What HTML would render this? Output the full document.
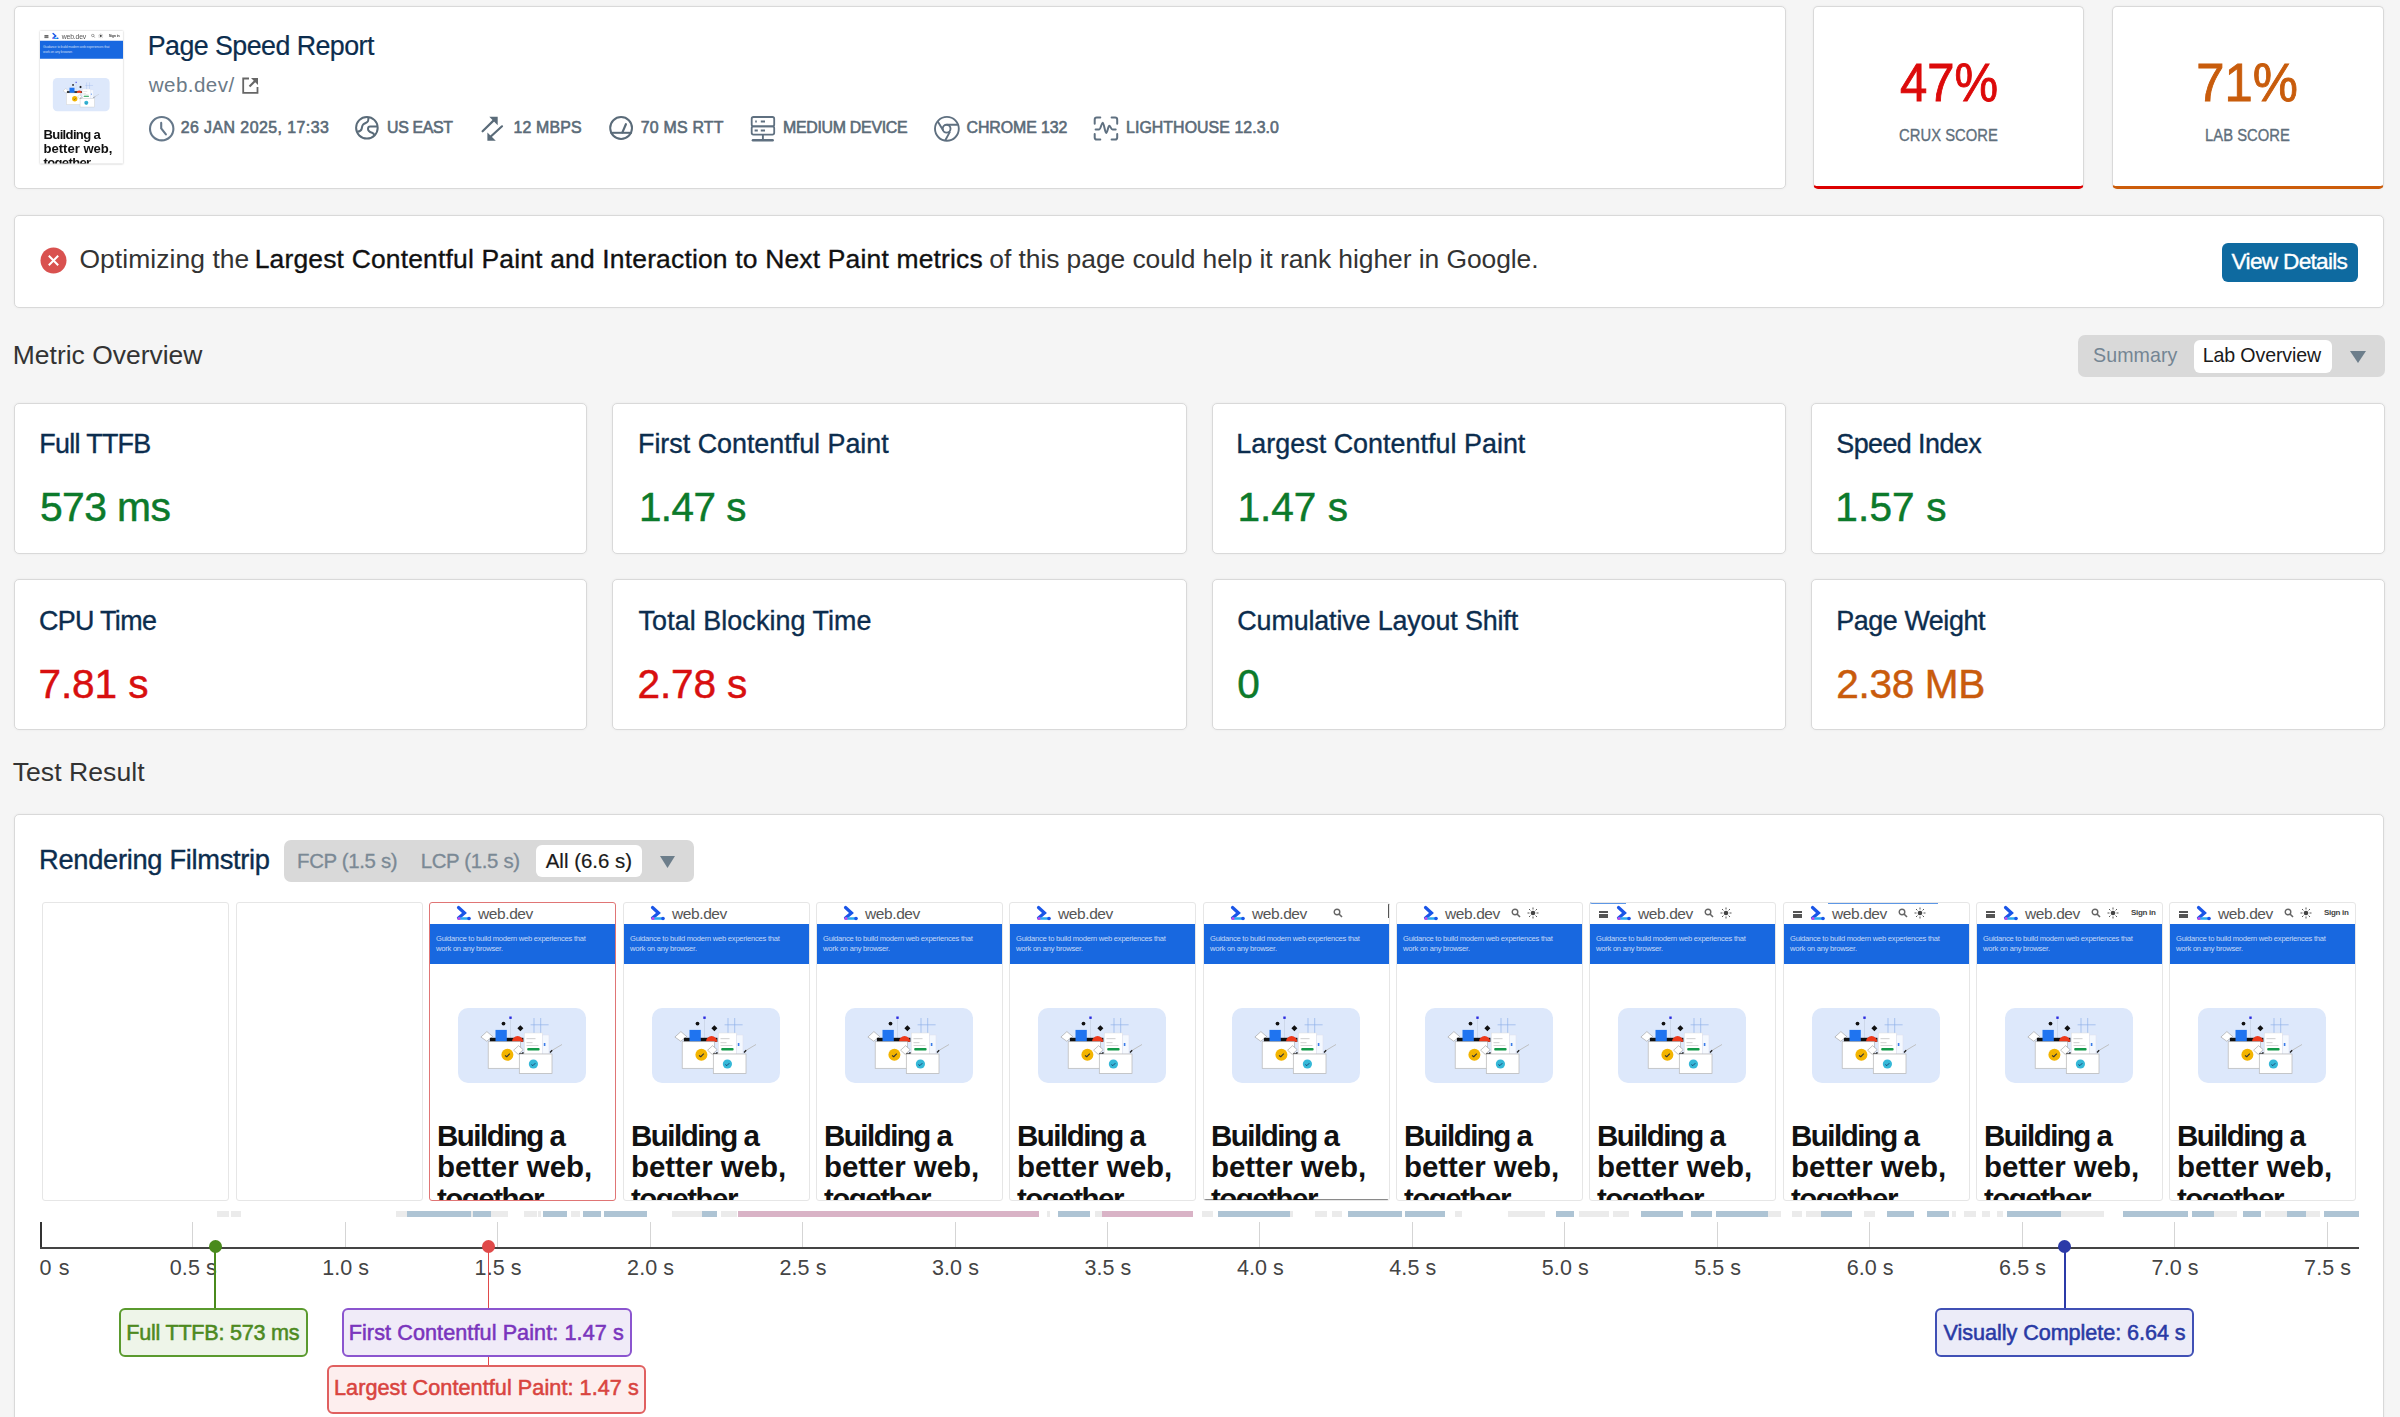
<!DOCTYPE html>
<html><head><meta charset="utf-8">
<style>
*{box-sizing:border-box;margin:0;padding:0}
html,body{width:2400px;height:1417px;overflow:hidden;background:#f5f5f5;font-family:"Liberation Sans",sans-serif;position:relative}
.abs{position:absolute}
.card{position:absolute;background:#fff;border:1px solid #d9d9d9;border-radius:5px;box-shadow:0 0 3px rgba(0,0,0,.05)}
.t{position:absolute;white-space:nowrap;line-height:1}
.navy{color:#0c2d4e}
.med{-webkit-text-stroke:0.35px currentColor}
.meta{color:#5b6b78;font-weight:bold;font-size:16px}
.meta2{color:#5f6f7c;font-size:16px;-webkit-text-stroke:0.4px currentColor}
</style></head><body>
<style>
.mt{font-size:26px}
.mv{font-size:40px}
.g{color:#0c7a2b}.r{color:#d80f0f}.o{color:#c95b0c}
</style>
<style>
.tick{font-size:20px;color:#444}
.lbl{border:1.5px solid;border-radius:5px;font-size:21px;line-height:46px;text-align:center;white-space:nowrap;-webkit-text-stroke:0.35px currentColor}
</style>

<div class="card" style="left:14px;top:6px;width:1772px;height:183px"></div>
<div class="card" style="left:1813px;top:6px;width:271px;height:183px;border-bottom:3px solid #dc0000"></div>
<div class="card" style="left:2112px;top:6px;width:272px;height:183px;border-bottom:3px solid #cc5c0a"></div>
<div class="abs" style="left:39.5px;top:31px;width:187px;height:299px;background:#fff;overflow:hidden;transform:scale(0.4435);transform-origin:0 0;box-shadow:0 0 4px rgba(0,0,0,.25)"><div class="abs" style="left:10px;top:9px;width:9px;height:7px;border-top:2px solid #555;border-bottom:2px solid #555"></div><div class="abs" style="left:10px;top:11.5px;width:9px;height:2px;background:#555"></div>
<svg class="abs" style="left:27px;top:3px" width="16" height="16" viewBox="0 0 16 16"><path d="M2.5 2.5l6 5.5-6 5" stroke="#1a56e8" stroke-width="3.2" fill="none" stroke-linecap="round"/><path d="M3 13.5h10" stroke="#29a8f0" stroke-width="2.6" stroke-linecap="round"/><circle cx="3" cy="13.5" r="1.6" fill="#c04ae8"/><circle cx="13" cy="13.5" r="1.8" fill="#1a56e8"/></svg>
<div class="t" style="left:49px;top:4px;font-size:15.5px;color:#555;letter-spacing:-0.4px">web.dev</div>
<svg class="abs" style="left:115px;top:6px" width="10" height="10" viewBox="0 0 10 10"><circle cx="4" cy="4" r="2.8" stroke="#666" stroke-width="1.4" fill="none"/><path d="M6 6l3 3" stroke="#666" stroke-width="1.6"/></svg>
<svg class="abs" style="left:131px;top:5px" width="12" height="12" viewBox="0 0 12 12"><circle cx="6" cy="6" r="2.3" fill="#444"/><path d="M6 0.5v2M6 9.5v2M0.5 6h2M9.5 6h2M2 2l1.4 1.4M8.6 8.6L10 10M2 10l1.4-1.4M8.6 3.4L10 2" stroke="#555" stroke-width="1"/></svg>
<div class="t" style="left:155px;top:7px;font-size:8px;font-weight:bold;color:#444;letter-spacing:-0.3px">Sign in</div>
<div class="abs" style="left:0px;top:22px;width:187px;height:40px;background:#1868e0"></div>
<div class="t" style="left:7px;top:32px;font-size:7.6px;line-height:10px;color:rgba(255,255,255,.75);letter-spacing:-0.25px">Guidance to build modern web experiences that<br>work on any browser.</div>
<div class="abs" style="left:29px;top:106px;width:128px;height:75px;background:#dde8fb;border-radius:10px"></div>
<svg class="abs" style="left:29px;top:106px" width="128" height="75" viewBox="2 3 128 75">
<path d="M54.5 13v20" stroke="#c9d3e6" stroke-width="0.8"/><rect x="53.3" y="11.5" width="2.4" height="2.4" fill="#2a2ae0"/>
<circle cx="47.5" cy="18.6" r="1.9" fill="#111"/>
<path d="M64.4 20.2l3 3-3 3-3-3z" fill="#111"/>
<path d="M78 13v16M84.7 13v16M74.6 19.8h18" stroke="#8fb2ea" stroke-width="0.7"/>
<path d="M24.9 32l6-5.4 5.8 5 -6 4.6z" fill="#fff" stroke="#999" stroke-width="0.6"/>
<rect x="33.9" y="32.8" width="33.5" height="4" fill="#111"/>
<rect x="39.5" y="24.9" width="11.3" height="11.8" fill="#1f74f0"/>
<path d="M56 36.7a5.6 5.6 0 0 1 11.2 0z" fill="#ee3a1c"/>
<rect x="32.2" y="36.7" width="32.2" height="26.6" fill="#fff" stroke="#b5b5b5" stroke-width="0.7"/>
<circle cx="51.4" cy="49.7" r="6" fill="#f3b400"/><path d="M49 50.5l1.8 1.2 3-3" stroke="#333" stroke-width="1.1" fill="none"/>
<rect x="68.4" y="28" width="18" height="21" fill="#fff" stroke="#ddd" stroke-width="0.5"/>
<rect x="86.4" y="30" width="6.6" height="19" fill="#f4f8fe" stroke="#dde" stroke-width="0.5"/>
<rect x="70.5" y="33" width="9" height="1.2" fill="#d6d6d6"/><rect x="70.5" y="37" width="6" height="1.2" fill="#d6d6d6"/><rect x="70.5" y="40" width="12" height="1" fill="#d6d6d6"/>
<rect x="71.2" y="43" width="12.4" height="2.4" rx="1" fill="#149a4a"/><rect x="87.8" y="38" width="1.6" height="3" fill="#3b7be8"/>
<path d="M57.6 45.2l5-4.5 4.6 4 -5 4.7z" fill="#fff" stroke="#999" stroke-width="0.6"/>
<path d="M63 49h3l1.5-1.5" stroke="#111" stroke-width="1.6" fill="none"/>
<rect x="63.3" y="49" width="32.7" height="19.4" fill="#fff" stroke="#b5b5b5" stroke-width="0.7"/>
<circle cx="77.4" cy="59" r="4.6" fill="#35b8d8"/><path d="M75.4 59.6l1.5 1 2.4-2.4" stroke="#1a3a6a" stroke-width="0.9" fill="none"/>
<path d="M95 46l11-6.5" stroke="#bbb" stroke-width="0.9"/><path d="M94 47.5l2.2-2.2" stroke="#222" stroke-width="1.4"/>
</svg>
<div class="t" style="left:8px;top:218px;font-size:29.5px;line-height:31.3px;font-weight:bold;color:#111;letter-spacing:-1.52px">Building a<br><span style="letter-spacing:-0.05px">better web,</span><br>together</div></div>
<div class="t " style="left:147.7px;top:33.1px;font-size:26.8px;color:#0c2d4e;letter-spacing:-0.544px;-webkit-text-stroke:0.2px currentColor">Page Speed Report</div>
<div class="t " style="left:148.7px;top:74.9px;font-size:20.6px;color:#6b7a87;letter-spacing:0.443px;">web.dev/</div>
<svg class="abs" style="left:242px;top:77px" width="17" height="17" viewBox="0 0 17 17" fill="none" stroke="#666" stroke-width="1.8"><path d="M7 1.5H1.2v14.3h14.3V10"/><path d="M7.5 9.5l6-6" stroke-width="2.2"/><path d="M9 1h7v7z" fill="#666" stroke="none"/></svg>
<!-- meta row icons -->
<svg class="abs" style="left:145px;top:112px" width="35" height="32" viewBox="0 0 35 32" fill="none" stroke="#66788a" stroke-width="2.1" stroke-linecap="round"><circle cx="16.7" cy="16.7" r="11.7"/><path d="M16.2 10.9v5.4l4.7 6"/></svg>
<svg class="abs" style="left:345px;top:110px" width="40" height="36" viewBox="0 0 40 36" fill="none" stroke="#5a6b79" stroke-width="2" stroke-linejoin="round"><circle cx="21.9" cy="17.8" r="10.8"/><path d="M12.2 21.8C14.5 21.5 16.3 20.6 16.7 18.7 17.2 16.5 17 15.6 18.2 14.4 19.5 13.2 22 12.9 22.9 11.2 23.5 10 23.4 8.5 23.4 7.1"/><path d="M32.7 16.6H25.2C23.7 16.6 23 17.6 23 19 23 21.4 25.2 22.2 27.1 22.8 28.6 23.3 29.2 24.3 29.4 25.6"/></svg>
<svg class="abs" style="left:474px;top:110px" width="40" height="36" viewBox="0 0 40 36" fill="none" stroke="#5a6b79" stroke-width="2.2" stroke-linecap="round"><path d="M8.6 21.3L21.5 8.6"/><path d="M15.3 6.8H23.7V15.2z" fill="#5a6b79" stroke="none"/><path d="M28 16.3L15.2 28"/><path d="M13.4 22.6V30.8H21.8z" fill="#5a6b79" stroke="none"/></svg>
<svg class="abs" style="left:600px;top:110px" width="40" height="36" viewBox="0 0 40 36" fill="none" stroke="#5a6b79" stroke-width="2"><circle cx="21.1" cy="18" r="10.9"/><path d="M10.5 22.8H31.8"/><path d="M22.4 22.4L25.9 14.2" stroke-width="2.2" stroke-linecap="round"/></svg>
<svg class="abs" style="left:745px;top:110px" width="40" height="36" viewBox="0 0 40 36" fill="none" stroke="#5f7080" stroke-width="1.8"><rect x="6.7" y="7" width="22.5" height="9.3" rx="1.8"/><rect x="6.7" y="16.3" width="22.5" height="8.3" rx="1.8"/><path d="M17.9 24.6v5.3" stroke-width="1.9"/><path d="M7.9 30.2h19.8" stroke-width="2.4" stroke-linecap="round"/><path d="M10.2 11.6h1.6M15.8 11.6h4.2M9.6 20.6h3.2M15.8 20.6h4.2" stroke-width="2"/></svg>
<svg class="abs" style="left:928px;top:110px" width="40" height="36" viewBox="0 0 40 36" fill="none" stroke="#5f7080" stroke-width="1.9"><circle cx="18.9" cy="18.8" r="11.9"/><circle cx="18.6" cy="18.7" r="3.9"/><path d="M18.6 14.8H29.8M15.2 20.5L9.8 11.4M22 21.6L17.3 30.3"/></svg>
<svg class="abs" style="left:1088px;top:110px" width="40" height="36" viewBox="0 0 40 36" fill="none" stroke="#5f7080" stroke-width="2" stroke-linecap="round" stroke-linejoin="round"><path d="M12.3 7.6H8.8C7.6 7.6 6.7 8.5 6.7 9.7V13.7"/><path d="M23.6 7.6H27.1C28.3 7.6 29.2 8.5 29.2 9.7V13.7"/><path d="M6.7 24.1V27.5C6.7 28.7 7.6 29.6 8.8 29.6H12.3"/><path d="M29.2 24.1V27.5C29.2 28.7 28.3 29.6 27.1 29.6H23.6"/><path d="M7.6 19.4H11.2C12.6 19.4 13.6 12.7 14.7 12.7 15.9 12.7 17 22.9 18.2 22.9 19.4 22.9 20.2 15.8 21.3 15.8 22.4 15.8 23 19.4 24.6 19.4H27.7"/></svg>

<div class="t " style="left:180.7px;top:120.1px;font-size:15.9px;color:#5b6b78;letter-spacing:0.447px;-webkit-text-stroke:0.6px currentColor">26 JAN 2025, 17:33</div>
<div class="t " style="left:387.0px;top:120.1px;font-size:15.9px;color:#5b6b78;letter-spacing:-0.333px;-webkit-text-stroke:0.6px currentColor">US EAST</div>
<div class="t " style="left:513.6px;top:120.1px;font-size:15.9px;color:#5b6b78;letter-spacing:0.133px;-webkit-text-stroke:0.6px currentColor">12 MBPS</div>
<div class="t " style="left:640.8px;top:120.1px;font-size:15.9px;color:#5b6b78;letter-spacing:0.213px;-webkit-text-stroke:0.6px currentColor">70 MS RTT</div>
<div class="t " style="left:783.0px;top:120.1px;font-size:15.9px;color:#5b6b78;letter-spacing:-0.283px;-webkit-text-stroke:0.6px currentColor">MEDIUM DEVICE</div>
<div class="t " style="left:966.6px;top:120.1px;font-size:15.9px;color:#5b6b78;letter-spacing:-0.089px;-webkit-text-stroke:0.6px currentColor">CHROME 132</div>
<div class="t " style="left:1126.0px;top:120.1px;font-size:15.9px;color:#5b6b78;letter-spacing:0.062px;-webkit-text-stroke:0.6px currentColor">LIGHTHOUSE 12.3.0</div>
<div class="t " style="left:1899.8px;top:56.2px;font-size:53.92px;color:#dc0a0a;transform:scaleX(0.9095);transform-origin:1px 0;-webkit-text-stroke:0.9px currentColor">47%</div>
<div class="t " style="left:2196.0px;top:56.2px;font-size:53.92px;color:#c85c0c;transform:scaleX(0.9417);transform-origin:3px 0;-webkit-text-stroke:0.9px currentColor">71%</div>
<div class="t med" style="left:1899.4px;top:127.7px;font-size:16.86px;color:#5f6f7c;transform:scaleX(0.8775);transform-origin:1px 0;">CRUX SCORE</div>
<div class="t med" style="left:2205.4px;top:127.7px;font-size:16.86px;color:#5f6f7c;transform:scaleX(0.8775);transform-origin:1px 0;">LAB SCORE</div>
<div class="card" style="left:14px;top:215px;width:2370px;height:93px"></div>
<svg class="abs" style="left:40px;top:247px" width="27" height="27" viewBox="0 0 27 27"><circle cx="13.5" cy="13.5" r="13" fill="#d9514f"/><path d="M8.8 8.8l9.4 9.4M18.2 8.8l-9.4 9.4" stroke="#fff" stroke-width="2"/></svg>
<div class="t " style="left:79.4px;top:246.0px;font-size:26.45px;color:#333;letter-spacing:0.069px;">Optimizing the</div>
<div class="t med" style="left:254.7px;top:246.0px;font-size:26.45px;color:#111;letter-spacing:0.179px;">Largest Contentful Paint and Interaction to Next Paint metrics</div>
<div class="t " style="left:989.3px;top:246.0px;font-size:26.45px;color:#333;letter-spacing:-0.069px;">of this page could help it rank higher in Google.</div>
<div class="abs" style="left:2222px;top:243px;width:136px;height:39px;background:#0e6aa0;border-radius:6px"></div>
<div class="t med" style="left:2231.6px;top:249.7px;font-size:22.7px;color:#fff;letter-spacing:-0.736px;">View Details</div>
<div class="t " style="left:12.8px;top:341.7px;font-size:26.45px;color:#333;letter-spacing:0.007px;">Metric Overview</div>
<div class="abs" style="left:2078px;top:335px;width:307px;height:42px;background:#d9d9d9;border-radius:7px"></div>
<div class="abs" style="left:2194px;top:340px;width:138px;height:33px;background:#fff;border-radius:6px"></div>
<div class="t " style="left:2093.0px;top:345.9px;font-size:19.62px;color:#748593;letter-spacing:0.083px;">Summary</div>
<div class="t " style="left:2202.7px;top:345.9px;font-size:19.62px;color:#1a1a1a;letter-spacing:-0.127px;">Lab Overview</div>
<svg class="abs" style="left:2350px;top:351px" width="16" height="12" viewBox="0 0 16 12"><path d="M0 0h16L8 12z" fill="#6d7e8b"/></svg>
<div class="card" style="left:14px;top:403px;width:573px;height:151px"></div>
<div class="card" style="left:612px;top:403px;width:575px;height:151px"></div>
<div class="card" style="left:1212px;top:403px;width:574px;height:151px"></div>
<div class="card" style="left:1811px;top:403px;width:574px;height:151px"></div>
<div class="card" style="left:14px;top:579px;width:573px;height:151px"></div>
<div class="card" style="left:612px;top:579px;width:575px;height:151px"></div>
<div class="card" style="left:1212px;top:579px;width:574px;height:151px"></div>
<div class="card" style="left:1811px;top:579px;width:574px;height:151px"></div>
<div class="t med" style="left:39.3px;top:430.5px;font-size:26.89px;color:#0c2d4e;letter-spacing:-0.687px;">Full TTFB</div>
<div class="t med" style="left:638.0px;top:430.7px;font-size:26.89px;color:#0c2d4e;letter-spacing:-0.012px;">First Contentful Paint</div>
<div class="t med" style="left:1236.3px;top:430.7px;font-size:26.89px;color:#0c2d4e;letter-spacing:0.030px;">Largest Contentful Paint</div>
<div class="t med" style="left:1836.3px;top:430.7px;font-size:26.89px;color:#0c2d4e;letter-spacing:-0.560px;">Speed Index</div>
<div class="t med" style="left:39.0px;top:607.7px;font-size:26.89px;color:#0c2d4e;letter-spacing:-0.657px;">CPU Time</div>
<div class="t med" style="left:638.6px;top:607.7px;font-size:26.89px;color:#0c2d4e;letter-spacing:0.078px;">Total Blocking Time</div>
<div class="t med" style="left:1237.3px;top:607.7px;font-size:26.89px;color:#0c2d4e;letter-spacing:-0.136px;">Cumulative Layout Shift</div>
<div class="t med" style="left:1836.3px;top:607.7px;font-size:26.89px;color:#0c2d4e;letter-spacing:-0.430px;">Page Weight</div>
<div class="t " style="left:40.0px;top:486.5px;font-size:40.84px;color:#0c7a2b;letter-spacing:-0.600px;-webkit-text-stroke:0.5px currentColor">573 ms</div>
<div class="t " style="left:638.9px;top:487.1px;font-size:40.33px;color:#0c7a2b;letter-spacing:-0.460px;-webkit-text-stroke:0.5px currentColor">1.47 s</div>
<div class="t " style="left:1237.5px;top:486.9px;font-size:40.55px;color:#0c7a2b;letter-spacing:0.000px;-webkit-text-stroke:0.5px currentColor">1.47 s</div>
<div class="t " style="left:1835.3px;top:486.9px;font-size:40.55px;color:#0c7a2b;letter-spacing:0.140px;-webkit-text-stroke:0.5px currentColor">1.57 s</div>
<div class="t " style="left:38.5px;top:663.9px;font-size:40.55px;color:#d80f0f;letter-spacing:-0.100px;-webkit-text-stroke:0.5px currentColor">7.81 s</div>
<div class="t " style="left:637.6px;top:663.9px;font-size:40.55px;color:#d80f0f;letter-spacing:-0.160px;-webkit-text-stroke:0.5px currentColor">2.78 s</div>
<div class="t " style="left:1237.3px;top:663.9px;font-size:40.55px;color:#0c7a2b;letter-spacing:0.000px;-webkit-text-stroke:0.5px currentColor">0</div>
<div class="t " style="left:1836.3px;top:663.9px;font-size:40.55px;color:#c95b0c;letter-spacing:-0.333px;-webkit-text-stroke:0.5px currentColor">2.38 MB</div>
<div class="t " style="left:12.7px;top:758.8px;font-size:26.6px;color:#333;letter-spacing:0.030px;">Test Result</div>
<!-- ============ FILMSTRIP ============ -->
<div class="card" style="left:14px;top:814px;width:2370px;height:700px"></div>
<div class="t med" style="left:39.0px;top:846.3px;font-size:27.3px;color:#0c2d4e;letter-spacing:-0.311px;">Rendering Filmstrip</div>
<div class="abs" style="left:284px;top:840px;width:410px;height:42px;background:#d9d9d9;border-radius:7px"></div>
<div class="abs" style="left:536px;top:845px;width:106px;height:32px;background:#fff;border-radius:6px"></div>
<div class="t " style="left:297.0px;top:851.0px;font-size:20.4px;color:#7b8995;letter-spacing:-0.330px;-webkit-text-stroke:0.3px currentColor">FCP (1.5 s)</div>
<div class="t " style="left:420.7px;top:851.0px;font-size:20.4px;color:#7b8995;letter-spacing:-0.340px;-webkit-text-stroke:0.3px currentColor">LCP (1.5 s)</div>
<div class="t " style="left:545.7px;top:851.0px;font-size:20.4px;color:#1a1a1a;letter-spacing:0.030px;-webkit-text-stroke:0.2px currentColor">All (6.6 s)</div>
<svg class="abs" style="left:660px;top:856px" width="15" height="12" viewBox="0 0 15 12"><path d="M0 0h15L7.5 12z" fill="#6d7e8b"/></svg>
<div class="abs" style="left:42px;top:902px;width:187px;height:299px;background:#fff;overflow:hidden;border-radius:3px">
</div>
<div class="abs" style="left:42px;top:902px;width:187px;height:299px;border:1px solid #e6e6e6;border-radius:3px"></div>
<div class="abs" style="left:236px;top:902px;width:187px;height:299px;background:#fff;overflow:hidden;border-radius:3px">
</div>
<div class="abs" style="left:236px;top:902px;width:187px;height:299px;border:1px solid #e6e6e6;border-radius:3px"></div>
<div class="abs" style="left:429px;top:902px;width:187px;height:299px;background:#fff;overflow:hidden;border-radius:3px">
<svg class="abs" style="left:27px;top:3px" width="16" height="16" viewBox="0 0 16 16"><path d="M2.5 2.5l6 5.5-6 5" stroke="#1a56e8" stroke-width="3.2" fill="none" stroke-linecap="round"/><path d="M3 13.5h10" stroke="#29a8f0" stroke-width="2.6" stroke-linecap="round"/><circle cx="3" cy="13.5" r="1.6" fill="#c04ae8"/><circle cx="13" cy="13.5" r="1.8" fill="#1a56e8"/></svg>
<div class="t" style="left:49px;top:4px;font-size:15.5px;color:#555;letter-spacing:-0.4px">web.dev</div>
<div class="abs" style="left:0px;top:22px;width:187px;height:40px;background:#1868e0"></div>
<div class="t" style="left:7px;top:32px;font-size:7.6px;line-height:10px;color:rgba(255,255,255,.75);letter-spacing:-0.25px">Guidance to build modern web experiences that<br>work on any browser.</div>
<div class="abs" style="left:29px;top:106px;width:128px;height:75px;background:#dde8fb;border-radius:10px"></div>
<svg class="abs" style="left:29px;top:106px" width="128" height="75" viewBox="2 3 128 75">
<path d="M54.5 13v20" stroke="#c9d3e6" stroke-width="0.8"/><rect x="53.3" y="11.5" width="2.4" height="2.4" fill="#2a2ae0"/>
<circle cx="47.5" cy="18.6" r="1.9" fill="#111"/>
<path d="M64.4 20.2l3 3-3 3-3-3z" fill="#111"/>
<path d="M78 13v16M84.7 13v16M74.6 19.8h18" stroke="#8fb2ea" stroke-width="0.7"/>
<path d="M24.9 32l6-5.4 5.8 5 -6 4.6z" fill="#fff" stroke="#999" stroke-width="0.6"/>
<rect x="33.9" y="32.8" width="33.5" height="4" fill="#111"/>
<rect x="39.5" y="24.9" width="11.3" height="11.8" fill="#1f74f0"/>
<path d="M56 36.7a5.6 5.6 0 0 1 11.2 0z" fill="#ee3a1c"/>
<rect x="32.2" y="36.7" width="32.2" height="26.6" fill="#fff" stroke="#b5b5b5" stroke-width="0.7"/>
<circle cx="51.4" cy="49.7" r="6" fill="#f3b400"/><path d="M49 50.5l1.8 1.2 3-3" stroke="#333" stroke-width="1.1" fill="none"/>
<rect x="68.4" y="28" width="18" height="21" fill="#fff" stroke="#ddd" stroke-width="0.5"/>
<rect x="86.4" y="30" width="6.6" height="19" fill="#f4f8fe" stroke="#dde" stroke-width="0.5"/>
<rect x="70.5" y="33" width="9" height="1.2" fill="#d6d6d6"/><rect x="70.5" y="37" width="6" height="1.2" fill="#d6d6d6"/><rect x="70.5" y="40" width="12" height="1" fill="#d6d6d6"/>
<rect x="71.2" y="43" width="12.4" height="2.4" rx="1" fill="#149a4a"/><rect x="87.8" y="38" width="1.6" height="3" fill="#3b7be8"/>
<path d="M57.6 45.2l5-4.5 4.6 4 -5 4.7z" fill="#fff" stroke="#999" stroke-width="0.6"/>
<path d="M63 49h3l1.5-1.5" stroke="#111" stroke-width="1.6" fill="none"/>
<rect x="63.3" y="49" width="32.7" height="19.4" fill="#fff" stroke="#b5b5b5" stroke-width="0.7"/>
<circle cx="77.4" cy="59" r="4.6" fill="#35b8d8"/><path d="M75.4 59.6l1.5 1 2.4-2.4" stroke="#1a3a6a" stroke-width="0.9" fill="none"/>
<path d="M95 46l11-6.5" stroke="#bbb" stroke-width="0.9"/><path d="M94 47.5l2.2-2.2" stroke="#222" stroke-width="1.4"/>
</svg>
<div class="t" style="left:8px;top:218px;font-size:29.5px;line-height:31.3px;font-weight:bold;color:#111;letter-spacing:-1.52px">Building a<br><span style="letter-spacing:-0.05px">better web,</span><br>together</div>
</div>
<div class="abs" style="left:429px;top:902px;width:187px;height:299px;border:1.5px solid #e07575;border-radius:3px"></div>
<div class="abs" style="left:623px;top:902px;width:187px;height:299px;background:#fff;overflow:hidden;border-radius:3px">
<svg class="abs" style="left:27px;top:3px" width="16" height="16" viewBox="0 0 16 16"><path d="M2.5 2.5l6 5.5-6 5" stroke="#1a56e8" stroke-width="3.2" fill="none" stroke-linecap="round"/><path d="M3 13.5h10" stroke="#29a8f0" stroke-width="2.6" stroke-linecap="round"/><circle cx="3" cy="13.5" r="1.6" fill="#c04ae8"/><circle cx="13" cy="13.5" r="1.8" fill="#1a56e8"/></svg>
<div class="t" style="left:49px;top:4px;font-size:15.5px;color:#555;letter-spacing:-0.4px">web.dev</div>
<div class="abs" style="left:0px;top:22px;width:187px;height:40px;background:#1868e0"></div>
<div class="t" style="left:7px;top:32px;font-size:7.6px;line-height:10px;color:rgba(255,255,255,.75);letter-spacing:-0.25px">Guidance to build modern web experiences that<br>work on any browser.</div>
<div class="abs" style="left:29px;top:106px;width:128px;height:75px;background:#dde8fb;border-radius:10px"></div>
<svg class="abs" style="left:29px;top:106px" width="128" height="75" viewBox="2 3 128 75">
<path d="M54.5 13v20" stroke="#c9d3e6" stroke-width="0.8"/><rect x="53.3" y="11.5" width="2.4" height="2.4" fill="#2a2ae0"/>
<circle cx="47.5" cy="18.6" r="1.9" fill="#111"/>
<path d="M64.4 20.2l3 3-3 3-3-3z" fill="#111"/>
<path d="M78 13v16M84.7 13v16M74.6 19.8h18" stroke="#8fb2ea" stroke-width="0.7"/>
<path d="M24.9 32l6-5.4 5.8 5 -6 4.6z" fill="#fff" stroke="#999" stroke-width="0.6"/>
<rect x="33.9" y="32.8" width="33.5" height="4" fill="#111"/>
<rect x="39.5" y="24.9" width="11.3" height="11.8" fill="#1f74f0"/>
<path d="M56 36.7a5.6 5.6 0 0 1 11.2 0z" fill="#ee3a1c"/>
<rect x="32.2" y="36.7" width="32.2" height="26.6" fill="#fff" stroke="#b5b5b5" stroke-width="0.7"/>
<circle cx="51.4" cy="49.7" r="6" fill="#f3b400"/><path d="M49 50.5l1.8 1.2 3-3" stroke="#333" stroke-width="1.1" fill="none"/>
<rect x="68.4" y="28" width="18" height="21" fill="#fff" stroke="#ddd" stroke-width="0.5"/>
<rect x="86.4" y="30" width="6.6" height="19" fill="#f4f8fe" stroke="#dde" stroke-width="0.5"/>
<rect x="70.5" y="33" width="9" height="1.2" fill="#d6d6d6"/><rect x="70.5" y="37" width="6" height="1.2" fill="#d6d6d6"/><rect x="70.5" y="40" width="12" height="1" fill="#d6d6d6"/>
<rect x="71.2" y="43" width="12.4" height="2.4" rx="1" fill="#149a4a"/><rect x="87.8" y="38" width="1.6" height="3" fill="#3b7be8"/>
<path d="M57.6 45.2l5-4.5 4.6 4 -5 4.7z" fill="#fff" stroke="#999" stroke-width="0.6"/>
<path d="M63 49h3l1.5-1.5" stroke="#111" stroke-width="1.6" fill="none"/>
<rect x="63.3" y="49" width="32.7" height="19.4" fill="#fff" stroke="#b5b5b5" stroke-width="0.7"/>
<circle cx="77.4" cy="59" r="4.6" fill="#35b8d8"/><path d="M75.4 59.6l1.5 1 2.4-2.4" stroke="#1a3a6a" stroke-width="0.9" fill="none"/>
<path d="M95 46l11-6.5" stroke="#bbb" stroke-width="0.9"/><path d="M94 47.5l2.2-2.2" stroke="#222" stroke-width="1.4"/>
</svg>
<div class="t" style="left:8px;top:218px;font-size:29.5px;line-height:31.3px;font-weight:bold;color:#111;letter-spacing:-1.52px">Building a<br><span style="letter-spacing:-0.05px">better web,</span><br>together</div>
</div>
<div class="abs" style="left:623px;top:902px;width:187px;height:299px;border:1px solid #e6e6e6;border-radius:3px"></div>
<div class="abs" style="left:816px;top:902px;width:187px;height:299px;background:#fff;overflow:hidden;border-radius:3px">
<svg class="abs" style="left:27px;top:3px" width="16" height="16" viewBox="0 0 16 16"><path d="M2.5 2.5l6 5.5-6 5" stroke="#1a56e8" stroke-width="3.2" fill="none" stroke-linecap="round"/><path d="M3 13.5h10" stroke="#29a8f0" stroke-width="2.6" stroke-linecap="round"/><circle cx="3" cy="13.5" r="1.6" fill="#c04ae8"/><circle cx="13" cy="13.5" r="1.8" fill="#1a56e8"/></svg>
<div class="t" style="left:49px;top:4px;font-size:15.5px;color:#555;letter-spacing:-0.4px">web.dev</div>
<div class="abs" style="left:0px;top:22px;width:187px;height:40px;background:#1868e0"></div>
<div class="t" style="left:7px;top:32px;font-size:7.6px;line-height:10px;color:rgba(255,255,255,.75);letter-spacing:-0.25px">Guidance to build modern web experiences that<br>work on any browser.</div>
<div class="abs" style="left:29px;top:106px;width:128px;height:75px;background:#dde8fb;border-radius:10px"></div>
<svg class="abs" style="left:29px;top:106px" width="128" height="75" viewBox="2 3 128 75">
<path d="M54.5 13v20" stroke="#c9d3e6" stroke-width="0.8"/><rect x="53.3" y="11.5" width="2.4" height="2.4" fill="#2a2ae0"/>
<circle cx="47.5" cy="18.6" r="1.9" fill="#111"/>
<path d="M64.4 20.2l3 3-3 3-3-3z" fill="#111"/>
<path d="M78 13v16M84.7 13v16M74.6 19.8h18" stroke="#8fb2ea" stroke-width="0.7"/>
<path d="M24.9 32l6-5.4 5.8 5 -6 4.6z" fill="#fff" stroke="#999" stroke-width="0.6"/>
<rect x="33.9" y="32.8" width="33.5" height="4" fill="#111"/>
<rect x="39.5" y="24.9" width="11.3" height="11.8" fill="#1f74f0"/>
<path d="M56 36.7a5.6 5.6 0 0 1 11.2 0z" fill="#ee3a1c"/>
<rect x="32.2" y="36.7" width="32.2" height="26.6" fill="#fff" stroke="#b5b5b5" stroke-width="0.7"/>
<circle cx="51.4" cy="49.7" r="6" fill="#f3b400"/><path d="M49 50.5l1.8 1.2 3-3" stroke="#333" stroke-width="1.1" fill="none"/>
<rect x="68.4" y="28" width="18" height="21" fill="#fff" stroke="#ddd" stroke-width="0.5"/>
<rect x="86.4" y="30" width="6.6" height="19" fill="#f4f8fe" stroke="#dde" stroke-width="0.5"/>
<rect x="70.5" y="33" width="9" height="1.2" fill="#d6d6d6"/><rect x="70.5" y="37" width="6" height="1.2" fill="#d6d6d6"/><rect x="70.5" y="40" width="12" height="1" fill="#d6d6d6"/>
<rect x="71.2" y="43" width="12.4" height="2.4" rx="1" fill="#149a4a"/><rect x="87.8" y="38" width="1.6" height="3" fill="#3b7be8"/>
<path d="M57.6 45.2l5-4.5 4.6 4 -5 4.7z" fill="#fff" stroke="#999" stroke-width="0.6"/>
<path d="M63 49h3l1.5-1.5" stroke="#111" stroke-width="1.6" fill="none"/>
<rect x="63.3" y="49" width="32.7" height="19.4" fill="#fff" stroke="#b5b5b5" stroke-width="0.7"/>
<circle cx="77.4" cy="59" r="4.6" fill="#35b8d8"/><path d="M75.4 59.6l1.5 1 2.4-2.4" stroke="#1a3a6a" stroke-width="0.9" fill="none"/>
<path d="M95 46l11-6.5" stroke="#bbb" stroke-width="0.9"/><path d="M94 47.5l2.2-2.2" stroke="#222" stroke-width="1.4"/>
</svg>
<div class="t" style="left:8px;top:218px;font-size:29.5px;line-height:31.3px;font-weight:bold;color:#111;letter-spacing:-1.52px">Building a<br><span style="letter-spacing:-0.05px">better web,</span><br>together</div>
</div>
<div class="abs" style="left:816px;top:902px;width:187px;height:299px;border:1px solid #e6e6e6;border-radius:3px"></div>
<div class="abs" style="left:1009px;top:902px;width:187px;height:299px;background:#fff;overflow:hidden;border-radius:3px">
<svg class="abs" style="left:27px;top:3px" width="16" height="16" viewBox="0 0 16 16"><path d="M2.5 2.5l6 5.5-6 5" stroke="#1a56e8" stroke-width="3.2" fill="none" stroke-linecap="round"/><path d="M3 13.5h10" stroke="#29a8f0" stroke-width="2.6" stroke-linecap="round"/><circle cx="3" cy="13.5" r="1.6" fill="#c04ae8"/><circle cx="13" cy="13.5" r="1.8" fill="#1a56e8"/></svg>
<div class="t" style="left:49px;top:4px;font-size:15.5px;color:#555;letter-spacing:-0.4px">web.dev</div>
<div class="abs" style="left:0px;top:22px;width:187px;height:40px;background:#1868e0"></div>
<div class="t" style="left:7px;top:32px;font-size:7.6px;line-height:10px;color:rgba(255,255,255,.75);letter-spacing:-0.25px">Guidance to build modern web experiences that<br>work on any browser.</div>
<div class="abs" style="left:29px;top:106px;width:128px;height:75px;background:#dde8fb;border-radius:10px"></div>
<svg class="abs" style="left:29px;top:106px" width="128" height="75" viewBox="2 3 128 75">
<path d="M54.5 13v20" stroke="#c9d3e6" stroke-width="0.8"/><rect x="53.3" y="11.5" width="2.4" height="2.4" fill="#2a2ae0"/>
<circle cx="47.5" cy="18.6" r="1.9" fill="#111"/>
<path d="M64.4 20.2l3 3-3 3-3-3z" fill="#111"/>
<path d="M78 13v16M84.7 13v16M74.6 19.8h18" stroke="#8fb2ea" stroke-width="0.7"/>
<path d="M24.9 32l6-5.4 5.8 5 -6 4.6z" fill="#fff" stroke="#999" stroke-width="0.6"/>
<rect x="33.9" y="32.8" width="33.5" height="4" fill="#111"/>
<rect x="39.5" y="24.9" width="11.3" height="11.8" fill="#1f74f0"/>
<path d="M56 36.7a5.6 5.6 0 0 1 11.2 0z" fill="#ee3a1c"/>
<rect x="32.2" y="36.7" width="32.2" height="26.6" fill="#fff" stroke="#b5b5b5" stroke-width="0.7"/>
<circle cx="51.4" cy="49.7" r="6" fill="#f3b400"/><path d="M49 50.5l1.8 1.2 3-3" stroke="#333" stroke-width="1.1" fill="none"/>
<rect x="68.4" y="28" width="18" height="21" fill="#fff" stroke="#ddd" stroke-width="0.5"/>
<rect x="86.4" y="30" width="6.6" height="19" fill="#f4f8fe" stroke="#dde" stroke-width="0.5"/>
<rect x="70.5" y="33" width="9" height="1.2" fill="#d6d6d6"/><rect x="70.5" y="37" width="6" height="1.2" fill="#d6d6d6"/><rect x="70.5" y="40" width="12" height="1" fill="#d6d6d6"/>
<rect x="71.2" y="43" width="12.4" height="2.4" rx="1" fill="#149a4a"/><rect x="87.8" y="38" width="1.6" height="3" fill="#3b7be8"/>
<path d="M57.6 45.2l5-4.5 4.6 4 -5 4.7z" fill="#fff" stroke="#999" stroke-width="0.6"/>
<path d="M63 49h3l1.5-1.5" stroke="#111" stroke-width="1.6" fill="none"/>
<rect x="63.3" y="49" width="32.7" height="19.4" fill="#fff" stroke="#b5b5b5" stroke-width="0.7"/>
<circle cx="77.4" cy="59" r="4.6" fill="#35b8d8"/><path d="M75.4 59.6l1.5 1 2.4-2.4" stroke="#1a3a6a" stroke-width="0.9" fill="none"/>
<path d="M95 46l11-6.5" stroke="#bbb" stroke-width="0.9"/><path d="M94 47.5l2.2-2.2" stroke="#222" stroke-width="1.4"/>
</svg>
<div class="t" style="left:8px;top:218px;font-size:29.5px;line-height:31.3px;font-weight:bold;color:#111;letter-spacing:-1.52px">Building a<br><span style="letter-spacing:-0.05px">better web,</span><br>together</div>
</div>
<div class="abs" style="left:1009px;top:902px;width:187px;height:299px;border:1px solid #e6e6e6;border-radius:3px"></div>
<div class="abs" style="left:1203px;top:902px;width:187px;height:299px;background:#fff;overflow:hidden;border-radius:3px">
<svg class="abs" style="left:27px;top:3px" width="16" height="16" viewBox="0 0 16 16"><path d="M2.5 2.5l6 5.5-6 5" stroke="#1a56e8" stroke-width="3.2" fill="none" stroke-linecap="round"/><path d="M3 13.5h10" stroke="#29a8f0" stroke-width="2.6" stroke-linecap="round"/><circle cx="3" cy="13.5" r="1.6" fill="#c04ae8"/><circle cx="13" cy="13.5" r="1.8" fill="#1a56e8"/></svg>
<div class="t" style="left:49px;top:4px;font-size:15.5px;color:#555;letter-spacing:-0.4px">web.dev</div>
<svg class="abs" style="left:130px;top:6px" width="10" height="10" viewBox="0 0 10 10"><circle cx="4" cy="4" r="2.8" stroke="#666" stroke-width="1.4" fill="none"/><path d="M6 6l3 3" stroke="#666" stroke-width="1.6"/></svg>
<div class="abs" style="left:185px;top:2px;width:2px;height:14px;background:#555"></div>
<div class="abs" style="left:1px;top:296.5px;width:184px;height:1.5px;background:#8a8a8a"></div>
<div class="abs" style="left:0px;top:22px;width:187px;height:40px;background:#1868e0"></div>
<div class="t" style="left:7px;top:32px;font-size:7.6px;line-height:10px;color:rgba(255,255,255,.75);letter-spacing:-0.25px">Guidance to build modern web experiences that<br>work on any browser.</div>
<div class="abs" style="left:29px;top:106px;width:128px;height:75px;background:#dde8fb;border-radius:10px"></div>
<svg class="abs" style="left:29px;top:106px" width="128" height="75" viewBox="2 3 128 75">
<path d="M54.5 13v20" stroke="#c9d3e6" stroke-width="0.8"/><rect x="53.3" y="11.5" width="2.4" height="2.4" fill="#2a2ae0"/>
<circle cx="47.5" cy="18.6" r="1.9" fill="#111"/>
<path d="M64.4 20.2l3 3-3 3-3-3z" fill="#111"/>
<path d="M78 13v16M84.7 13v16M74.6 19.8h18" stroke="#8fb2ea" stroke-width="0.7"/>
<path d="M24.9 32l6-5.4 5.8 5 -6 4.6z" fill="#fff" stroke="#999" stroke-width="0.6"/>
<rect x="33.9" y="32.8" width="33.5" height="4" fill="#111"/>
<rect x="39.5" y="24.9" width="11.3" height="11.8" fill="#1f74f0"/>
<path d="M56 36.7a5.6 5.6 0 0 1 11.2 0z" fill="#ee3a1c"/>
<rect x="32.2" y="36.7" width="32.2" height="26.6" fill="#fff" stroke="#b5b5b5" stroke-width="0.7"/>
<circle cx="51.4" cy="49.7" r="6" fill="#f3b400"/><path d="M49 50.5l1.8 1.2 3-3" stroke="#333" stroke-width="1.1" fill="none"/>
<rect x="68.4" y="28" width="18" height="21" fill="#fff" stroke="#ddd" stroke-width="0.5"/>
<rect x="86.4" y="30" width="6.6" height="19" fill="#f4f8fe" stroke="#dde" stroke-width="0.5"/>
<rect x="70.5" y="33" width="9" height="1.2" fill="#d6d6d6"/><rect x="70.5" y="37" width="6" height="1.2" fill="#d6d6d6"/><rect x="70.5" y="40" width="12" height="1" fill="#d6d6d6"/>
<rect x="71.2" y="43" width="12.4" height="2.4" rx="1" fill="#149a4a"/><rect x="87.8" y="38" width="1.6" height="3" fill="#3b7be8"/>
<path d="M57.6 45.2l5-4.5 4.6 4 -5 4.7z" fill="#fff" stroke="#999" stroke-width="0.6"/>
<path d="M63 49h3l1.5-1.5" stroke="#111" stroke-width="1.6" fill="none"/>
<rect x="63.3" y="49" width="32.7" height="19.4" fill="#fff" stroke="#b5b5b5" stroke-width="0.7"/>
<circle cx="77.4" cy="59" r="4.6" fill="#35b8d8"/><path d="M75.4 59.6l1.5 1 2.4-2.4" stroke="#1a3a6a" stroke-width="0.9" fill="none"/>
<path d="M95 46l11-6.5" stroke="#bbb" stroke-width="0.9"/><path d="M94 47.5l2.2-2.2" stroke="#222" stroke-width="1.4"/>
</svg>
<div class="t" style="left:8px;top:218px;font-size:29.5px;line-height:31.3px;font-weight:bold;color:#111;letter-spacing:-1.52px">Building a<br><span style="letter-spacing:-0.05px">better web,</span><br>together</div>
</div>
<div class="abs" style="left:1203px;top:902px;width:187px;height:299px;border:1px solid #e6e6e6;border-radius:3px"></div>
<div class="abs" style="left:1396px;top:902px;width:187px;height:299px;background:#fff;overflow:hidden;border-radius:3px">
<svg class="abs" style="left:27px;top:3px" width="16" height="16" viewBox="0 0 16 16"><path d="M2.5 2.5l6 5.5-6 5" stroke="#1a56e8" stroke-width="3.2" fill="none" stroke-linecap="round"/><path d="M3 13.5h10" stroke="#29a8f0" stroke-width="2.6" stroke-linecap="round"/><circle cx="3" cy="13.5" r="1.6" fill="#c04ae8"/><circle cx="13" cy="13.5" r="1.8" fill="#1a56e8"/></svg>
<div class="t" style="left:49px;top:4px;font-size:15.5px;color:#555;letter-spacing:-0.4px">web.dev</div>
<svg class="abs" style="left:115px;top:6px" width="10" height="10" viewBox="0 0 10 10"><circle cx="4" cy="4" r="2.8" stroke="#666" stroke-width="1.4" fill="none"/><path d="M6 6l3 3" stroke="#666" stroke-width="1.6"/></svg>
<svg class="abs" style="left:131px;top:5px" width="12" height="12" viewBox="0 0 12 12"><circle cx="6" cy="6" r="2.3" fill="#444"/><path d="M6 0.5v2M6 9.5v2M0.5 6h2M9.5 6h2M2 2l1.4 1.4M8.6 8.6L10 10M2 10l1.4-1.4M8.6 3.4L10 2" stroke="#555" stroke-width="1"/></svg>
<div class="abs" style="left:0px;top:22px;width:187px;height:40px;background:#1868e0"></div>
<div class="t" style="left:7px;top:32px;font-size:7.6px;line-height:10px;color:rgba(255,255,255,.75);letter-spacing:-0.25px">Guidance to build modern web experiences that<br>work on any browser.</div>
<div class="abs" style="left:29px;top:106px;width:128px;height:75px;background:#dde8fb;border-radius:10px"></div>
<svg class="abs" style="left:29px;top:106px" width="128" height="75" viewBox="2 3 128 75">
<path d="M54.5 13v20" stroke="#c9d3e6" stroke-width="0.8"/><rect x="53.3" y="11.5" width="2.4" height="2.4" fill="#2a2ae0"/>
<circle cx="47.5" cy="18.6" r="1.9" fill="#111"/>
<path d="M64.4 20.2l3 3-3 3-3-3z" fill="#111"/>
<path d="M78 13v16M84.7 13v16M74.6 19.8h18" stroke="#8fb2ea" stroke-width="0.7"/>
<path d="M24.9 32l6-5.4 5.8 5 -6 4.6z" fill="#fff" stroke="#999" stroke-width="0.6"/>
<rect x="33.9" y="32.8" width="33.5" height="4" fill="#111"/>
<rect x="39.5" y="24.9" width="11.3" height="11.8" fill="#1f74f0"/>
<path d="M56 36.7a5.6 5.6 0 0 1 11.2 0z" fill="#ee3a1c"/>
<rect x="32.2" y="36.7" width="32.2" height="26.6" fill="#fff" stroke="#b5b5b5" stroke-width="0.7"/>
<circle cx="51.4" cy="49.7" r="6" fill="#f3b400"/><path d="M49 50.5l1.8 1.2 3-3" stroke="#333" stroke-width="1.1" fill="none"/>
<rect x="68.4" y="28" width="18" height="21" fill="#fff" stroke="#ddd" stroke-width="0.5"/>
<rect x="86.4" y="30" width="6.6" height="19" fill="#f4f8fe" stroke="#dde" stroke-width="0.5"/>
<rect x="70.5" y="33" width="9" height="1.2" fill="#d6d6d6"/><rect x="70.5" y="37" width="6" height="1.2" fill="#d6d6d6"/><rect x="70.5" y="40" width="12" height="1" fill="#d6d6d6"/>
<rect x="71.2" y="43" width="12.4" height="2.4" rx="1" fill="#149a4a"/><rect x="87.8" y="38" width="1.6" height="3" fill="#3b7be8"/>
<path d="M57.6 45.2l5-4.5 4.6 4 -5 4.7z" fill="#fff" stroke="#999" stroke-width="0.6"/>
<path d="M63 49h3l1.5-1.5" stroke="#111" stroke-width="1.6" fill="none"/>
<rect x="63.3" y="49" width="32.7" height="19.4" fill="#fff" stroke="#b5b5b5" stroke-width="0.7"/>
<circle cx="77.4" cy="59" r="4.6" fill="#35b8d8"/><path d="M75.4 59.6l1.5 1 2.4-2.4" stroke="#1a3a6a" stroke-width="0.9" fill="none"/>
<path d="M95 46l11-6.5" stroke="#bbb" stroke-width="0.9"/><path d="M94 47.5l2.2-2.2" stroke="#222" stroke-width="1.4"/>
</svg>
<div class="t" style="left:8px;top:218px;font-size:29.5px;line-height:31.3px;font-weight:bold;color:#111;letter-spacing:-1.52px">Building a<br><span style="letter-spacing:-0.05px">better web,</span><br>together</div>
</div>
<div class="abs" style="left:1396px;top:902px;width:187px;height:299px;border:1px solid #e6e6e6;border-radius:3px"></div>
<div class="abs" style="left:1589px;top:902px;width:187px;height:299px;background:#fff;overflow:hidden;border-radius:3px">
<div class="abs" style="left:1px;top:0px;width:36px;height:2px;background:#5d97e6"></div>
<div class="abs" style="left:10px;top:9px;width:9px;height:7px;border-top:2px solid #555;border-bottom:2px solid #555"></div><div class="abs" style="left:10px;top:11.5px;width:9px;height:2px;background:#555"></div>
<svg class="abs" style="left:27px;top:3px" width="16" height="16" viewBox="0 0 16 16"><path d="M2.5 2.5l6 5.5-6 5" stroke="#1a56e8" stroke-width="3.2" fill="none" stroke-linecap="round"/><path d="M3 13.5h10" stroke="#29a8f0" stroke-width="2.6" stroke-linecap="round"/><circle cx="3" cy="13.5" r="1.6" fill="#c04ae8"/><circle cx="13" cy="13.5" r="1.8" fill="#1a56e8"/></svg>
<div class="t" style="left:49px;top:4px;font-size:15.5px;color:#555;letter-spacing:-0.4px">web.dev</div>
<svg class="abs" style="left:115px;top:6px" width="10" height="10" viewBox="0 0 10 10"><circle cx="4" cy="4" r="2.8" stroke="#666" stroke-width="1.4" fill="none"/><path d="M6 6l3 3" stroke="#666" stroke-width="1.6"/></svg>
<svg class="abs" style="left:131px;top:5px" width="12" height="12" viewBox="0 0 12 12"><circle cx="6" cy="6" r="2.3" fill="#444"/><path d="M6 0.5v2M6 9.5v2M0.5 6h2M9.5 6h2M2 2l1.4 1.4M8.6 8.6L10 10M2 10l1.4-1.4M8.6 3.4L10 2" stroke="#555" stroke-width="1"/></svg>
<div class="abs" style="left:0px;top:22px;width:187px;height:40px;background:#1868e0"></div>
<div class="t" style="left:7px;top:32px;font-size:7.6px;line-height:10px;color:rgba(255,255,255,.75);letter-spacing:-0.25px">Guidance to build modern web experiences that<br>work on any browser.</div>
<div class="abs" style="left:29px;top:106px;width:128px;height:75px;background:#dde8fb;border-radius:10px"></div>
<svg class="abs" style="left:29px;top:106px" width="128" height="75" viewBox="2 3 128 75">
<path d="M54.5 13v20" stroke="#c9d3e6" stroke-width="0.8"/><rect x="53.3" y="11.5" width="2.4" height="2.4" fill="#2a2ae0"/>
<circle cx="47.5" cy="18.6" r="1.9" fill="#111"/>
<path d="M64.4 20.2l3 3-3 3-3-3z" fill="#111"/>
<path d="M78 13v16M84.7 13v16M74.6 19.8h18" stroke="#8fb2ea" stroke-width="0.7"/>
<path d="M24.9 32l6-5.4 5.8 5 -6 4.6z" fill="#fff" stroke="#999" stroke-width="0.6"/>
<rect x="33.9" y="32.8" width="33.5" height="4" fill="#111"/>
<rect x="39.5" y="24.9" width="11.3" height="11.8" fill="#1f74f0"/>
<path d="M56 36.7a5.6 5.6 0 0 1 11.2 0z" fill="#ee3a1c"/>
<rect x="32.2" y="36.7" width="32.2" height="26.6" fill="#fff" stroke="#b5b5b5" stroke-width="0.7"/>
<circle cx="51.4" cy="49.7" r="6" fill="#f3b400"/><path d="M49 50.5l1.8 1.2 3-3" stroke="#333" stroke-width="1.1" fill="none"/>
<rect x="68.4" y="28" width="18" height="21" fill="#fff" stroke="#ddd" stroke-width="0.5"/>
<rect x="86.4" y="30" width="6.6" height="19" fill="#f4f8fe" stroke="#dde" stroke-width="0.5"/>
<rect x="70.5" y="33" width="9" height="1.2" fill="#d6d6d6"/><rect x="70.5" y="37" width="6" height="1.2" fill="#d6d6d6"/><rect x="70.5" y="40" width="12" height="1" fill="#d6d6d6"/>
<rect x="71.2" y="43" width="12.4" height="2.4" rx="1" fill="#149a4a"/><rect x="87.8" y="38" width="1.6" height="3" fill="#3b7be8"/>
<path d="M57.6 45.2l5-4.5 4.6 4 -5 4.7z" fill="#fff" stroke="#999" stroke-width="0.6"/>
<path d="M63 49h3l1.5-1.5" stroke="#111" stroke-width="1.6" fill="none"/>
<rect x="63.3" y="49" width="32.7" height="19.4" fill="#fff" stroke="#b5b5b5" stroke-width="0.7"/>
<circle cx="77.4" cy="59" r="4.6" fill="#35b8d8"/><path d="M75.4 59.6l1.5 1 2.4-2.4" stroke="#1a3a6a" stroke-width="0.9" fill="none"/>
<path d="M95 46l11-6.5" stroke="#bbb" stroke-width="0.9"/><path d="M94 47.5l2.2-2.2" stroke="#222" stroke-width="1.4"/>
</svg>
<div class="t" style="left:8px;top:218px;font-size:29.5px;line-height:31.3px;font-weight:bold;color:#111;letter-spacing:-1.52px">Building a<br><span style="letter-spacing:-0.05px">better web,</span><br>together</div>
</div>
<div class="abs" style="left:1589px;top:902px;width:187px;height:299px;border:1px solid #e6e6e6;border-radius:3px"></div>
<div class="abs" style="left:1783px;top:902px;width:187px;height:299px;background:#fff;overflow:hidden;border-radius:3px">
<div class="abs" style="left:45px;top:0px;width:110px;height:2px;background:#5d97e6"></div>
<div class="abs" style="left:10px;top:9px;width:9px;height:7px;border-top:2px solid #555;border-bottom:2px solid #555"></div><div class="abs" style="left:10px;top:11.5px;width:9px;height:2px;background:#555"></div>
<svg class="abs" style="left:27px;top:3px" width="16" height="16" viewBox="0 0 16 16"><path d="M2.5 2.5l6 5.5-6 5" stroke="#1a56e8" stroke-width="3.2" fill="none" stroke-linecap="round"/><path d="M3 13.5h10" stroke="#29a8f0" stroke-width="2.6" stroke-linecap="round"/><circle cx="3" cy="13.5" r="1.6" fill="#c04ae8"/><circle cx="13" cy="13.5" r="1.8" fill="#1a56e8"/></svg>
<div class="t" style="left:49px;top:4px;font-size:15.5px;color:#555;letter-spacing:-0.4px">web.dev</div>
<svg class="abs" style="left:115px;top:6px" width="10" height="10" viewBox="0 0 10 10"><circle cx="4" cy="4" r="2.8" stroke="#666" stroke-width="1.4" fill="none"/><path d="M6 6l3 3" stroke="#666" stroke-width="1.6"/></svg>
<svg class="abs" style="left:131px;top:5px" width="12" height="12" viewBox="0 0 12 12"><circle cx="6" cy="6" r="2.3" fill="#444"/><path d="M6 0.5v2M6 9.5v2M0.5 6h2M9.5 6h2M2 2l1.4 1.4M8.6 8.6L10 10M2 10l1.4-1.4M8.6 3.4L10 2" stroke="#555" stroke-width="1"/></svg>
<div class="abs" style="left:0px;top:22px;width:187px;height:40px;background:#1868e0"></div>
<div class="t" style="left:7px;top:32px;font-size:7.6px;line-height:10px;color:rgba(255,255,255,.75);letter-spacing:-0.25px">Guidance to build modern web experiences that<br>work on any browser.</div>
<div class="abs" style="left:29px;top:106px;width:128px;height:75px;background:#dde8fb;border-radius:10px"></div>
<svg class="abs" style="left:29px;top:106px" width="128" height="75" viewBox="2 3 128 75">
<path d="M54.5 13v20" stroke="#c9d3e6" stroke-width="0.8"/><rect x="53.3" y="11.5" width="2.4" height="2.4" fill="#2a2ae0"/>
<circle cx="47.5" cy="18.6" r="1.9" fill="#111"/>
<path d="M64.4 20.2l3 3-3 3-3-3z" fill="#111"/>
<path d="M78 13v16M84.7 13v16M74.6 19.8h18" stroke="#8fb2ea" stroke-width="0.7"/>
<path d="M24.9 32l6-5.4 5.8 5 -6 4.6z" fill="#fff" stroke="#999" stroke-width="0.6"/>
<rect x="33.9" y="32.8" width="33.5" height="4" fill="#111"/>
<rect x="39.5" y="24.9" width="11.3" height="11.8" fill="#1f74f0"/>
<path d="M56 36.7a5.6 5.6 0 0 1 11.2 0z" fill="#ee3a1c"/>
<rect x="32.2" y="36.7" width="32.2" height="26.6" fill="#fff" stroke="#b5b5b5" stroke-width="0.7"/>
<circle cx="51.4" cy="49.7" r="6" fill="#f3b400"/><path d="M49 50.5l1.8 1.2 3-3" stroke="#333" stroke-width="1.1" fill="none"/>
<rect x="68.4" y="28" width="18" height="21" fill="#fff" stroke="#ddd" stroke-width="0.5"/>
<rect x="86.4" y="30" width="6.6" height="19" fill="#f4f8fe" stroke="#dde" stroke-width="0.5"/>
<rect x="70.5" y="33" width="9" height="1.2" fill="#d6d6d6"/><rect x="70.5" y="37" width="6" height="1.2" fill="#d6d6d6"/><rect x="70.5" y="40" width="12" height="1" fill="#d6d6d6"/>
<rect x="71.2" y="43" width="12.4" height="2.4" rx="1" fill="#149a4a"/><rect x="87.8" y="38" width="1.6" height="3" fill="#3b7be8"/>
<path d="M57.6 45.2l5-4.5 4.6 4 -5 4.7z" fill="#fff" stroke="#999" stroke-width="0.6"/>
<path d="M63 49h3l1.5-1.5" stroke="#111" stroke-width="1.6" fill="none"/>
<rect x="63.3" y="49" width="32.7" height="19.4" fill="#fff" stroke="#b5b5b5" stroke-width="0.7"/>
<circle cx="77.4" cy="59" r="4.6" fill="#35b8d8"/><path d="M75.4 59.6l1.5 1 2.4-2.4" stroke="#1a3a6a" stroke-width="0.9" fill="none"/>
<path d="M95 46l11-6.5" stroke="#bbb" stroke-width="0.9"/><path d="M94 47.5l2.2-2.2" stroke="#222" stroke-width="1.4"/>
</svg>
<div class="t" style="left:8px;top:218px;font-size:29.5px;line-height:31.3px;font-weight:bold;color:#111;letter-spacing:-1.52px">Building a<br><span style="letter-spacing:-0.05px">better web,</span><br>together</div>
</div>
<div class="abs" style="left:1783px;top:902px;width:187px;height:299px;border:1px solid #e6e6e6;border-radius:3px"></div>
<div class="abs" style="left:1976px;top:902px;width:187px;height:299px;background:#fff;overflow:hidden;border-radius:3px">
<div class="abs" style="left:10px;top:9px;width:9px;height:7px;border-top:2px solid #555;border-bottom:2px solid #555"></div><div class="abs" style="left:10px;top:11.5px;width:9px;height:2px;background:#555"></div>
<svg class="abs" style="left:27px;top:3px" width="16" height="16" viewBox="0 0 16 16"><path d="M2.5 2.5l6 5.5-6 5" stroke="#1a56e8" stroke-width="3.2" fill="none" stroke-linecap="round"/><path d="M3 13.5h10" stroke="#29a8f0" stroke-width="2.6" stroke-linecap="round"/><circle cx="3" cy="13.5" r="1.6" fill="#c04ae8"/><circle cx="13" cy="13.5" r="1.8" fill="#1a56e8"/></svg>
<div class="t" style="left:49px;top:4px;font-size:15.5px;color:#555;letter-spacing:-0.4px">web.dev</div>
<svg class="abs" style="left:115px;top:6px" width="10" height="10" viewBox="0 0 10 10"><circle cx="4" cy="4" r="2.8" stroke="#666" stroke-width="1.4" fill="none"/><path d="M6 6l3 3" stroke="#666" stroke-width="1.6"/></svg>
<svg class="abs" style="left:131px;top:5px" width="12" height="12" viewBox="0 0 12 12"><circle cx="6" cy="6" r="2.3" fill="#444"/><path d="M6 0.5v2M6 9.5v2M0.5 6h2M9.5 6h2M2 2l1.4 1.4M8.6 8.6L10 10M2 10l1.4-1.4M8.6 3.4L10 2" stroke="#555" stroke-width="1"/></svg>
<div class="t" style="left:155px;top:7px;font-size:8px;font-weight:bold;color:#444;letter-spacing:-0.3px">Sign in</div>
<div class="abs" style="left:0px;top:22px;width:187px;height:40px;background:#1868e0"></div>
<div class="t" style="left:7px;top:32px;font-size:7.6px;line-height:10px;color:rgba(255,255,255,.75);letter-spacing:-0.25px">Guidance to build modern web experiences that<br>work on any browser.</div>
<div class="abs" style="left:29px;top:106px;width:128px;height:75px;background:#dde8fb;border-radius:10px"></div>
<svg class="abs" style="left:29px;top:106px" width="128" height="75" viewBox="2 3 128 75">
<path d="M54.5 13v20" stroke="#c9d3e6" stroke-width="0.8"/><rect x="53.3" y="11.5" width="2.4" height="2.4" fill="#2a2ae0"/>
<circle cx="47.5" cy="18.6" r="1.9" fill="#111"/>
<path d="M64.4 20.2l3 3-3 3-3-3z" fill="#111"/>
<path d="M78 13v16M84.7 13v16M74.6 19.8h18" stroke="#8fb2ea" stroke-width="0.7"/>
<path d="M24.9 32l6-5.4 5.8 5 -6 4.6z" fill="#fff" stroke="#999" stroke-width="0.6"/>
<rect x="33.9" y="32.8" width="33.5" height="4" fill="#111"/>
<rect x="39.5" y="24.9" width="11.3" height="11.8" fill="#1f74f0"/>
<path d="M56 36.7a5.6 5.6 0 0 1 11.2 0z" fill="#ee3a1c"/>
<rect x="32.2" y="36.7" width="32.2" height="26.6" fill="#fff" stroke="#b5b5b5" stroke-width="0.7"/>
<circle cx="51.4" cy="49.7" r="6" fill="#f3b400"/><path d="M49 50.5l1.8 1.2 3-3" stroke="#333" stroke-width="1.1" fill="none"/>
<rect x="68.4" y="28" width="18" height="21" fill="#fff" stroke="#ddd" stroke-width="0.5"/>
<rect x="86.4" y="30" width="6.6" height="19" fill="#f4f8fe" stroke="#dde" stroke-width="0.5"/>
<rect x="70.5" y="33" width="9" height="1.2" fill="#d6d6d6"/><rect x="70.5" y="37" width="6" height="1.2" fill="#d6d6d6"/><rect x="70.5" y="40" width="12" height="1" fill="#d6d6d6"/>
<rect x="71.2" y="43" width="12.4" height="2.4" rx="1" fill="#149a4a"/><rect x="87.8" y="38" width="1.6" height="3" fill="#3b7be8"/>
<path d="M57.6 45.2l5-4.5 4.6 4 -5 4.7z" fill="#fff" stroke="#999" stroke-width="0.6"/>
<path d="M63 49h3l1.5-1.5" stroke="#111" stroke-width="1.6" fill="none"/>
<rect x="63.3" y="49" width="32.7" height="19.4" fill="#fff" stroke="#b5b5b5" stroke-width="0.7"/>
<circle cx="77.4" cy="59" r="4.6" fill="#35b8d8"/><path d="M75.4 59.6l1.5 1 2.4-2.4" stroke="#1a3a6a" stroke-width="0.9" fill="none"/>
<path d="M95 46l11-6.5" stroke="#bbb" stroke-width="0.9"/><path d="M94 47.5l2.2-2.2" stroke="#222" stroke-width="1.4"/>
</svg>
<div class="t" style="left:8px;top:218px;font-size:29.5px;line-height:31.3px;font-weight:bold;color:#111;letter-spacing:-1.52px">Building a<br><span style="letter-spacing:-0.05px">better web,</span><br>together</div>
</div>
<div class="abs" style="left:1976px;top:902px;width:187px;height:299px;border:1px solid #e6e6e6;border-radius:3px"></div>
<div class="abs" style="left:2169px;top:902px;width:187px;height:299px;background:#fff;overflow:hidden;border-radius:3px">
<div class="abs" style="left:10px;top:9px;width:9px;height:7px;border-top:2px solid #555;border-bottom:2px solid #555"></div><div class="abs" style="left:10px;top:11.5px;width:9px;height:2px;background:#555"></div>
<svg class="abs" style="left:27px;top:3px" width="16" height="16" viewBox="0 0 16 16"><path d="M2.5 2.5l6 5.5-6 5" stroke="#1a56e8" stroke-width="3.2" fill="none" stroke-linecap="round"/><path d="M3 13.5h10" stroke="#29a8f0" stroke-width="2.6" stroke-linecap="round"/><circle cx="3" cy="13.5" r="1.6" fill="#c04ae8"/><circle cx="13" cy="13.5" r="1.8" fill="#1a56e8"/></svg>
<div class="t" style="left:49px;top:4px;font-size:15.5px;color:#555;letter-spacing:-0.4px">web.dev</div>
<svg class="abs" style="left:115px;top:6px" width="10" height="10" viewBox="0 0 10 10"><circle cx="4" cy="4" r="2.8" stroke="#666" stroke-width="1.4" fill="none"/><path d="M6 6l3 3" stroke="#666" stroke-width="1.6"/></svg>
<svg class="abs" style="left:131px;top:5px" width="12" height="12" viewBox="0 0 12 12"><circle cx="6" cy="6" r="2.3" fill="#444"/><path d="M6 0.5v2M6 9.5v2M0.5 6h2M9.5 6h2M2 2l1.4 1.4M8.6 8.6L10 10M2 10l1.4-1.4M8.6 3.4L10 2" stroke="#555" stroke-width="1"/></svg>
<div class="t" style="left:155px;top:7px;font-size:8px;font-weight:bold;color:#444;letter-spacing:-0.3px">Sign in</div>
<div class="abs" style="left:0px;top:22px;width:187px;height:40px;background:#1868e0"></div>
<div class="t" style="left:7px;top:32px;font-size:7.6px;line-height:10px;color:rgba(255,255,255,.75);letter-spacing:-0.25px">Guidance to build modern web experiences that<br>work on any browser.</div>
<div class="abs" style="left:29px;top:106px;width:128px;height:75px;background:#dde8fb;border-radius:10px"></div>
<svg class="abs" style="left:29px;top:106px" width="128" height="75" viewBox="2 3 128 75">
<path d="M54.5 13v20" stroke="#c9d3e6" stroke-width="0.8"/><rect x="53.3" y="11.5" width="2.4" height="2.4" fill="#2a2ae0"/>
<circle cx="47.5" cy="18.6" r="1.9" fill="#111"/>
<path d="M64.4 20.2l3 3-3 3-3-3z" fill="#111"/>
<path d="M78 13v16M84.7 13v16M74.6 19.8h18" stroke="#8fb2ea" stroke-width="0.7"/>
<path d="M24.9 32l6-5.4 5.8 5 -6 4.6z" fill="#fff" stroke="#999" stroke-width="0.6"/>
<rect x="33.9" y="32.8" width="33.5" height="4" fill="#111"/>
<rect x="39.5" y="24.9" width="11.3" height="11.8" fill="#1f74f0"/>
<path d="M56 36.7a5.6 5.6 0 0 1 11.2 0z" fill="#ee3a1c"/>
<rect x="32.2" y="36.7" width="32.2" height="26.6" fill="#fff" stroke="#b5b5b5" stroke-width="0.7"/>
<circle cx="51.4" cy="49.7" r="6" fill="#f3b400"/><path d="M49 50.5l1.8 1.2 3-3" stroke="#333" stroke-width="1.1" fill="none"/>
<rect x="68.4" y="28" width="18" height="21" fill="#fff" stroke="#ddd" stroke-width="0.5"/>
<rect x="86.4" y="30" width="6.6" height="19" fill="#f4f8fe" stroke="#dde" stroke-width="0.5"/>
<rect x="70.5" y="33" width="9" height="1.2" fill="#d6d6d6"/><rect x="70.5" y="37" width="6" height="1.2" fill="#d6d6d6"/><rect x="70.5" y="40" width="12" height="1" fill="#d6d6d6"/>
<rect x="71.2" y="43" width="12.4" height="2.4" rx="1" fill="#149a4a"/><rect x="87.8" y="38" width="1.6" height="3" fill="#3b7be8"/>
<path d="M57.6 45.2l5-4.5 4.6 4 -5 4.7z" fill="#fff" stroke="#999" stroke-width="0.6"/>
<path d="M63 49h3l1.5-1.5" stroke="#111" stroke-width="1.6" fill="none"/>
<rect x="63.3" y="49" width="32.7" height="19.4" fill="#fff" stroke="#b5b5b5" stroke-width="0.7"/>
<circle cx="77.4" cy="59" r="4.6" fill="#35b8d8"/><path d="M75.4 59.6l1.5 1 2.4-2.4" stroke="#1a3a6a" stroke-width="0.9" fill="none"/>
<path d="M95 46l11-6.5" stroke="#bbb" stroke-width="0.9"/><path d="M94 47.5l2.2-2.2" stroke="#222" stroke-width="1.4"/>
</svg>
<div class="t" style="left:8px;top:218px;font-size:29.5px;line-height:31.3px;font-weight:bold;color:#111;letter-spacing:-1.52px">Building a<br><span style="letter-spacing:-0.05px">better web,</span><br>together</div>
</div>
<div class="abs" style="left:2169px;top:902px;width:187px;height:299px;border:1px solid #e6e6e6;border-radius:3px"></div>
<div class="abs" style="left:216.7px;top:1211px;width:12.3px;height:6px;background:#ebebeb"></div>
<div class="abs" style="left:231.0px;top:1211px;width:10.0px;height:6px;background:#ebebeb"></div>
<div class="abs" style="left:396.0px;top:1211px;width:10.7px;height:6px;background:#ebebeb"></div>
<div class="abs" style="left:470.7px;top:1211px;width:2.3px;height:6px;background:#ebebeb"></div>
<div class="abs" style="left:491.0px;top:1211px;width:17.0px;height:6px;background:#ebebeb"></div>
<div class="abs" style="left:524.0px;top:1211px;width:12.7px;height:6px;background:#ebebeb"></div>
<div class="abs" style="left:538.0px;top:1211px;width:3.0px;height:6px;background:#ebebeb"></div>
<div class="abs" style="left:571.0px;top:1211px;width:9.0px;height:6px;background:#ebebeb"></div>
<div class="abs" style="left:671.7px;top:1211px;width:30.0px;height:6px;background:#ebebeb"></div>
<div class="abs" style="left:720.7px;top:1211px;width:16.6px;height:6px;background:#ebebeb"></div>
<div class="abs" style="left:1046.7px;top:1211px;width:3.3px;height:6px;background:#ebebeb"></div>
<div class="abs" style="left:1095.0px;top:1211px;width:6.7px;height:6px;background:#ebebeb"></div>
<div class="abs" style="left:1201.7px;top:1211px;width:11.6px;height:6px;background:#ebebeb"></div>
<div class="abs" style="left:1290.0px;top:1211px;width:3.0px;height:6px;background:#ebebeb"></div>
<div class="abs" style="left:1315.0px;top:1211px;width:11.7px;height:6px;background:#ebebeb"></div>
<div class="abs" style="left:1331.7px;top:1211px;width:10.0px;height:6px;background:#ebebeb"></div>
<div class="abs" style="left:1455.0px;top:1211px;width:6.7px;height:6px;background:#ebebeb"></div>
<div class="abs" style="left:1507.5px;top:1211px;width:37.5px;height:6px;background:#ebebeb"></div>
<div class="abs" style="left:1578.7px;top:1211px;width:30.0px;height:6px;background:#ebebeb"></div>
<div class="abs" style="left:1612.5px;top:1211px;width:16.9px;height:6px;background:#ebebeb"></div>
<div class="abs" style="left:1768.0px;top:1211px;width:12.5px;height:6px;background:#ebebeb"></div>
<div class="abs" style="left:1791.7px;top:1211px;width:10.1px;height:6px;background:#ebebeb"></div>
<div class="abs" style="left:1805.6px;top:1211px;width:15.0px;height:6px;background:#ebebeb"></div>
<div class="abs" style="left:1863.7px;top:1211px;width:11.3px;height:6px;background:#ebebeb"></div>
<div class="abs" style="left:1952.0px;top:1211px;width:4.0px;height:6px;background:#ebebeb"></div>
<div class="abs" style="left:1964.2px;top:1211px;width:12.0px;height:6px;background:#ebebeb"></div>
<div class="abs" style="left:1982.0px;top:1211px;width:8.0px;height:6px;background:#ebebeb"></div>
<div class="abs" style="left:1997.0px;top:1211px;width:6.0px;height:6px;background:#ebebeb"></div>
<div class="abs" style="left:2060.5px;top:1211px;width:43.2px;height:6px;background:#ebebeb"></div>
<div class="abs" style="left:2214.3px;top:1211px;width:22.5px;height:6px;background:#ebebeb"></div>
<div class="abs" style="left:2265.0px;top:1211px;width:22.0px;height:6px;background:#ebebeb"></div>
<div class="abs" style="left:2306.0px;top:1211px;width:14.0px;height:6px;background:#ebebeb"></div>
<div class="abs" style="left:406.7px;top:1211px;width:64.0px;height:6px;background:#aec4d4"></div>
<div class="abs" style="left:473.0px;top:1211px;width:18.0px;height:6px;background:#aec4d4"></div>
<div class="abs" style="left:543.0px;top:1211px;width:23.7px;height:6px;background:#aec4d4"></div>
<div class="abs" style="left:582.7px;top:1211px;width:18.0px;height:6px;background:#aec4d4"></div>
<div class="abs" style="left:604.0px;top:1211px;width:42.7px;height:6px;background:#aec4d4"></div>
<div class="abs" style="left:701.7px;top:1211px;width:15.6px;height:6px;background:#aec4d4"></div>
<div class="abs" style="left:1058.3px;top:1211px;width:31.7px;height:6px;background:#aec4d4"></div>
<div class="abs" style="left:1218.3px;top:1211px;width:71.7px;height:6px;background:#aec4d4"></div>
<div class="abs" style="left:1348.3px;top:1211px;width:53.4px;height:6px;background:#aec4d4"></div>
<div class="abs" style="left:1405.0px;top:1211px;width:40.0px;height:6px;background:#aec4d4"></div>
<div class="abs" style="left:1556.2px;top:1211px;width:18.0px;height:6px;background:#aec4d4"></div>
<div class="abs" style="left:1640.6px;top:1211px;width:42.0px;height:6px;background:#aec4d4"></div>
<div class="abs" style="left:1691.2px;top:1211px;width:20.6px;height:6px;background:#aec4d4"></div>
<div class="abs" style="left:1716.4px;top:1211px;width:51.6px;height:6px;background:#aec4d4"></div>
<div class="abs" style="left:1820.6px;top:1211px;width:31.9px;height:6px;background:#aec4d4"></div>
<div class="abs" style="left:1887.3px;top:1211px;width:27.0px;height:6px;background:#aec4d4"></div>
<div class="abs" style="left:1926.7px;top:1211px;width:22.5px;height:6px;background:#aec4d4"></div>
<div class="abs" style="left:2007.0px;top:1211px;width:53.5px;height:6px;background:#aec4d4"></div>
<div class="abs" style="left:2123.2px;top:1211px;width:64.8px;height:6px;background:#aec4d4"></div>
<div class="abs" style="left:2191.8px;top:1211px;width:22.5px;height:6px;background:#aec4d4"></div>
<div class="abs" style="left:2243.2px;top:1211px;width:18.0px;height:6px;background:#aec4d4"></div>
<div class="abs" style="left:2287.4px;top:1211px;width:18.8px;height:6px;background:#aec4d4"></div>
<div class="abs" style="left:2323.8px;top:1211px;width:34.8px;height:6px;background:#aec4d4"></div>
<div class="abs" style="left:738.3px;top:1211px;width:301.0px;height:6px;background:#d9b3c6"></div>
<div class="abs" style="left:1101.7px;top:1211px;width:91.0px;height:6px;background:#d9b3c6"></div>
<div class="abs" style="left:40px;top:1222px;width:2px;height:27px;background:#333"></div>
<div class="abs" style="left:40px;top:1247px;width:2319px;height:2px;background:#444"></div>
<div class="abs" style="left:192.2px;top:1222px;width:1px;height:25px;background:#d5d5d5"></div>
<div class="abs" style="left:344.7px;top:1222px;width:1px;height:25px;background:#d5d5d5"></div>
<div class="abs" style="left:497.1px;top:1222px;width:1px;height:25px;background:#d5d5d5"></div>
<div class="abs" style="left:649.6px;top:1222px;width:1px;height:25px;background:#d5d5d5"></div>
<div class="abs" style="left:802.0px;top:1222px;width:1px;height:25px;background:#d5d5d5"></div>
<div class="abs" style="left:954.5px;top:1222px;width:1px;height:25px;background:#d5d5d5"></div>
<div class="abs" style="left:1106.9px;top:1222px;width:1px;height:25px;background:#d5d5d5"></div>
<div class="abs" style="left:1259.4px;top:1222px;width:1px;height:25px;background:#d5d5d5"></div>
<div class="abs" style="left:1411.8px;top:1222px;width:1px;height:25px;background:#d5d5d5"></div>
<div class="abs" style="left:1564.3px;top:1222px;width:1px;height:25px;background:#d5d5d5"></div>
<div class="abs" style="left:1716.7px;top:1222px;width:1px;height:25px;background:#d5d5d5"></div>
<div class="abs" style="left:1869.2px;top:1222px;width:1px;height:25px;background:#d5d5d5"></div>
<div class="abs" style="left:2021.6px;top:1222px;width:1px;height:25px;background:#d5d5d5"></div>
<div class="abs" style="left:2174.1px;top:1222px;width:1px;height:25px;background:#d5d5d5"></div>
<div class="abs" style="left:2326.6px;top:1222px;width:1px;height:25px;background:#d5d5d5"></div>
<div class="t " style="left:39.6px;top:1257.8px;font-size:21.5px;color:#444;letter-spacing:0.575px;">0 s</div>
<div class="t " style="left:169.8px;top:1257.8px;font-size:21.5px;color:#444;letter-spacing:0.075px;">0.5 s</div>
<div class="t " style="left:322.2px;top:1257.8px;font-size:21.5px;color:#444;letter-spacing:0.075px;">1.0 s</div>
<div class="t " style="left:474.6px;top:1257.8px;font-size:21.5px;color:#444;letter-spacing:0.075px;">1.5 s</div>
<div class="t " style="left:627.1px;top:1257.8px;font-size:21.5px;color:#444;letter-spacing:0.075px;">2.0 s</div>
<div class="t " style="left:779.5px;top:1257.8px;font-size:21.5px;color:#444;letter-spacing:0.075px;">2.5 s</div>
<div class="t " style="left:932.0px;top:1257.8px;font-size:21.5px;color:#444;letter-spacing:0.075px;">3.0 s</div>
<div class="t " style="left:1084.4px;top:1257.8px;font-size:21.5px;color:#444;letter-spacing:0.075px;">3.5 s</div>
<div class="t " style="left:1236.9px;top:1257.8px;font-size:21.5px;color:#444;letter-spacing:0.075px;">4.0 s</div>
<div class="t " style="left:1389.3px;top:1257.8px;font-size:21.5px;color:#444;letter-spacing:0.075px;">4.5 s</div>
<div class="t " style="left:1541.8px;top:1257.8px;font-size:21.5px;color:#444;letter-spacing:0.075px;">5.0 s</div>
<div class="t " style="left:1694.2px;top:1257.8px;font-size:21.5px;color:#444;letter-spacing:0.075px;">5.5 s</div>
<div class="t " style="left:1846.7px;top:1257.8px;font-size:21.5px;color:#444;letter-spacing:0.075px;">6.0 s</div>
<div class="t " style="left:1999.1px;top:1257.8px;font-size:21.5px;color:#444;letter-spacing:0.075px;">6.5 s</div>
<div class="t " style="left:2151.6px;top:1257.8px;font-size:21.5px;color:#444;letter-spacing:0.075px;">7.0 s</div>
<div class="t " style="left:2304.1px;top:1257.8px;font-size:21.5px;color:#444;letter-spacing:0.075px;">7.5 s</div>
<div class="abs" style="left:214.3px;top:1247px;width:1.5px;height:62px;background:#4a8a1c"></div><div class="abs" style="left:208.5px;top:1240px;width:13px;height:13px;border-radius:50%;background:#4a8a1c"></div>
<div class="abs" style="left:487.8px;top:1247px;width:1.5px;height:119px;background:#e04a4a"></div><div class="abs" style="left:482.0px;top:1240px;width:13px;height:13px;border-radius:50%;background:#e04a4a"></div>
<div class="abs" style="left:2064.1px;top:1247px;width:1.5px;height:62px;background:#2b3aa8"></div><div class="abs" style="left:2058.3px;top:1240px;width:13px;height:13px;border-radius:50%;background:#2b3aa8"></div>
<div class="abs" style="left:119px;top:1308px;width:189px;height:49px;border:2px solid #5a9a2e;background:#eef5e9;border-radius:6px"></div>
<div class="t " style="left:126.3px;top:1321.7px;font-size:21.6px;color:#4d8a1f;letter-spacing:-0.250px;-webkit-text-stroke:0.55px currentColor">Full TTFB: 573 ms</div>
<div class="abs" style="left:342px;top:1308px;width:290px;height:49px;border:2px solid #8b55cf;background:#f0ebf8;border-radius:6px"></div>
<div class="t " style="left:348.7px;top:1321.7px;font-size:21.6px;color:#7a35bd;letter-spacing:0.090px;-webkit-text-stroke:0.55px currentColor">First Contentful Paint: 1.47 s</div>
<div class="abs" style="left:327px;top:1365px;width:319px;height:49px;border:2px solid #e06060;background:#fdeeee;border-radius:6px"></div>
<div class="t " style="left:334.0px;top:1377.4px;font-size:21.6px;color:#d9443f;letter-spacing:0.074px;-webkit-text-stroke:0.55px currentColor">Largest Contentful Paint: 1.47 s</div>
<div class="abs" style="left:1935px;top:1308px;width:259px;height:49px;border:2px solid #4050b5;background:#ececf8;border-radius:6px"></div>
<div class="t " style="left:1943.6px;top:1321.8px;font-size:21.6px;color:#2a3aa5;letter-spacing:-0.050px;-webkit-text-stroke:0.55px currentColor">Visually Complete: 6.64 s</div>
</body></html>
